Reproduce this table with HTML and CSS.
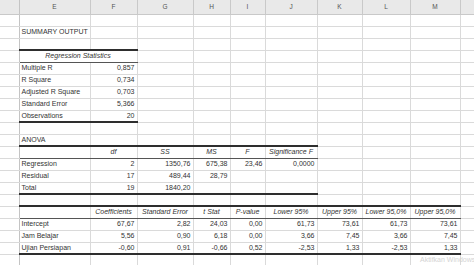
FILE: index.html
```html
<!DOCTYPE html>
<html>
<head>
<meta charset="utf-8">
<link rel="stylesheet" href="styles.css">
</head>
<body>
<div class="sheet">
<table class="grid">
<colgroup>
<col class="c-rh"><col class="c-e"><col class="c-f"><col class="c-g"><col class="c-h"><col class="c-i"><col class="c-j"><col class="c-k"><col class="c-l"><col class="c-m"><col class="c-n">
</colgroup>
<tr class="colhead"><td class="rh"></td><td>E</td><td>F</td><td>G</td><td>H</td><td>I</td><td>J</td><td>K</td><td>L</td><td>M</td><td></td></tr>
<tr><td class="rh"></td><td></td><td></td><td></td><td></td><td></td><td></td><td></td><td></td><td></td><td></td></tr>
<tr><td class="rh"></td><td class="ovf">SUMMARY OUTPUT</td><td></td><td></td><td></td><td></td><td></td><td></td><td></td><td></td><td></td></tr>
<tr><td class="rh"></td><td></td><td></td><td></td><td></td><td></td><td></td><td></td><td></td><td></td><td></td></tr>
<tr><td class="rh"></td><td colspan="2" class="hd tt hb">Regression Statistics</td><td></td><td></td><td></td><td></td><td></td><td></td><td></td><td></td></tr>
<tr><td class="rh"></td><td>Multiple R</td><td class="num">0,857</td><td></td><td></td><td></td><td></td><td></td><td></td><td></td><td></td></tr>
<tr><td class="rh"></td><td>R Square</td><td class="num">0,734</td><td></td><td></td><td></td><td></td><td></td><td></td><td></td><td></td></tr>
<tr><td class="rh"></td><td>Adjusted R Square</td><td class="num">0,703</td><td></td><td></td><td></td><td></td><td></td><td></td><td></td><td></td></tr>
<tr><td class="rh"></td><td>Standard Error</td><td class="num">5,366</td><td></td><td></td><td></td><td></td><td></td><td></td><td></td><td></td></tr>
<tr><td class="rh"></td><td class="tb">Observations</td><td class="num tb">20</td><td></td><td></td><td></td><td></td><td></td><td></td><td></td><td></td></tr>
<tr><td class="rh"></td><td></td><td></td><td></td><td></td><td></td><td></td><td></td><td></td><td></td><td></td></tr>
<tr><td class="rh"></td><td class="tb">ANOVA</td><td class="tb"></td><td class="tb"></td><td class="tb"></td><td class="tb"></td><td class="tb"></td><td></td><td></td><td></td><td></td></tr>
<tr><td class="rh"></td><td class="hb"></td><td class="hd hb">df</td><td class="hd hb">SS</td><td class="hd hb">MS</td><td class="hd hb">F</td><td class="hd hb">Significance F</td><td></td><td></td><td></td><td></td></tr>
<tr><td class="rh"></td><td>Regression</td><td class="num">2</td><td class="num">1350,76</td><td class="num">675,38</td><td class="num">23,46</td><td class="num">0,0000</td><td></td><td></td><td></td><td></td></tr>
<tr><td class="rh"></td><td>Residual</td><td class="num">17</td><td class="num">489,44</td><td class="num">28,79</td><td></td><td></td><td></td><td></td><td></td><td></td></tr>
<tr><td class="rh"></td><td class="tb">Total</td><td class="num tb">19</td><td class="num tb">1840,20</td><td class="tb"></td><td class="tb"></td><td class="tb"></td><td></td><td></td><td></td><td></td></tr>
<tr><td class="rh"></td><td></td><td></td><td></td><td></td><td></td><td></td><td></td><td></td><td></td><td></td></tr>
<tr><td class="rh"></td><td class="tt hb"></td><td class="hd tt hb">Coefficients</td><td class="hd tt hb">Standard Error</td><td class="hd tt hb">t Stat</td><td class="hd tt hb">P-value</td><td class="hd tt hb">Lower 95%</td><td class="hd tt hb">Upper 95%</td><td class="hd tt hb">Lower 95,0%</td><td class="hd tt hb">Upper 95,0%</td><td></td></tr>
<tr><td class="rh"></td><td>Intercept</td><td class="num">67,67</td><td class="num">2,82</td><td class="num">24,03</td><td class="num">0,00</td><td class="num">61,73</td><td class="num">73,61</td><td class="num">61,73</td><td class="num">73,61</td><td></td></tr>
<tr><td class="rh"></td><td>Jam Belajar</td><td class="num">5,56</td><td class="num">0,90</td><td class="num">6,18</td><td class="num">0,00</td><td class="num">3,66</td><td class="num">7,45</td><td class="num">3,66</td><td class="num">7,45</td><td></td></tr>
<tr><td class="rh"></td><td class="tb">Ujian Persiapan</td><td class="num tb">-0,60</td><td class="num tb">0,91</td><td class="num tb">-0,66</td><td class="num tb">0,52</td><td class="num tb">-2,53</td><td class="num tb">1,33</td><td class="num tb">-2,53</td><td class="num tb">1,33</td><td></td></tr>
<tr><td class="rh"></td><td></td><td></td><td></td><td></td><td></td><td></td><td></td><td></td><td></td><td></td></tr>
</table>
<div class="watermark">Aktifkan Windows</div>
</div>
</body>
</html>
```

FILE: styles.css
```css
html, body {
  margin: 0;
  padding: 0;
  background: #ffffff;
}
.sheet {
  position: relative;
  width: 474px;
  height: 265px;
  overflow: hidden;
}
.grid {
  border-collapse: collapse;
  table-layout: fixed;
  width: 474px;
  font-family: "Liberation Sans", Arial, sans-serif;
  font-size: 7px;
  color: #333333;
}
.c-rh { width: 19px; }
.c-e { width: 71px; }
.c-f { width: 47px; }
.c-g { width: 56px; }
.c-h { width: 37px; }
.c-i { width: 35px; }
.c-j { width: 52px; }
.c-k { width: 45px; }
.c-l { width: 48px; }
.c-m { width: 50px; }
.c-n { width: 14px; }
.grid tr {
  height: 12px;
}
.grid td {
  border: 1px solid #dadada;
  padding: 0 2px;
  line-height: 8px;
  white-space: nowrap;
  overflow: visible;
  vertical-align: middle;
}
.grid tr:first-child td {
  border-top: none;
}
.grid td:first-child {
  border-left: none;
}
.grid .colhead {
  height: 14px;
}
.grid .colhead td {
  background: #e9e9e9;
  border-color: #c9c9c9;
  text-align: center;
  color: #555555;
  font-size: 6.5px;
}
.grid td.rh {
  border-right: 1px solid #c4c4c4;
}
.grid td.num {
  text-align: right;
}
.grid td.hd {
  text-align: center;
  font-style: italic;
}
.grid td.tt {
  border-top: 2px solid #2e2e2e;
}
.grid td.tb {
  border-bottom: 2px solid #2e2e2e;
}
.grid td.hb {
  border-bottom: 1px solid #555555;
}
.watermark {
  position: absolute;
  left: 420px;
  top: 256px;
  font-family: "Liberation Sans", Arial, sans-serif;
  font-size: 7px;
  line-height: 8px;
  color: #d4d4d4;
  white-space: nowrap;
}
```
